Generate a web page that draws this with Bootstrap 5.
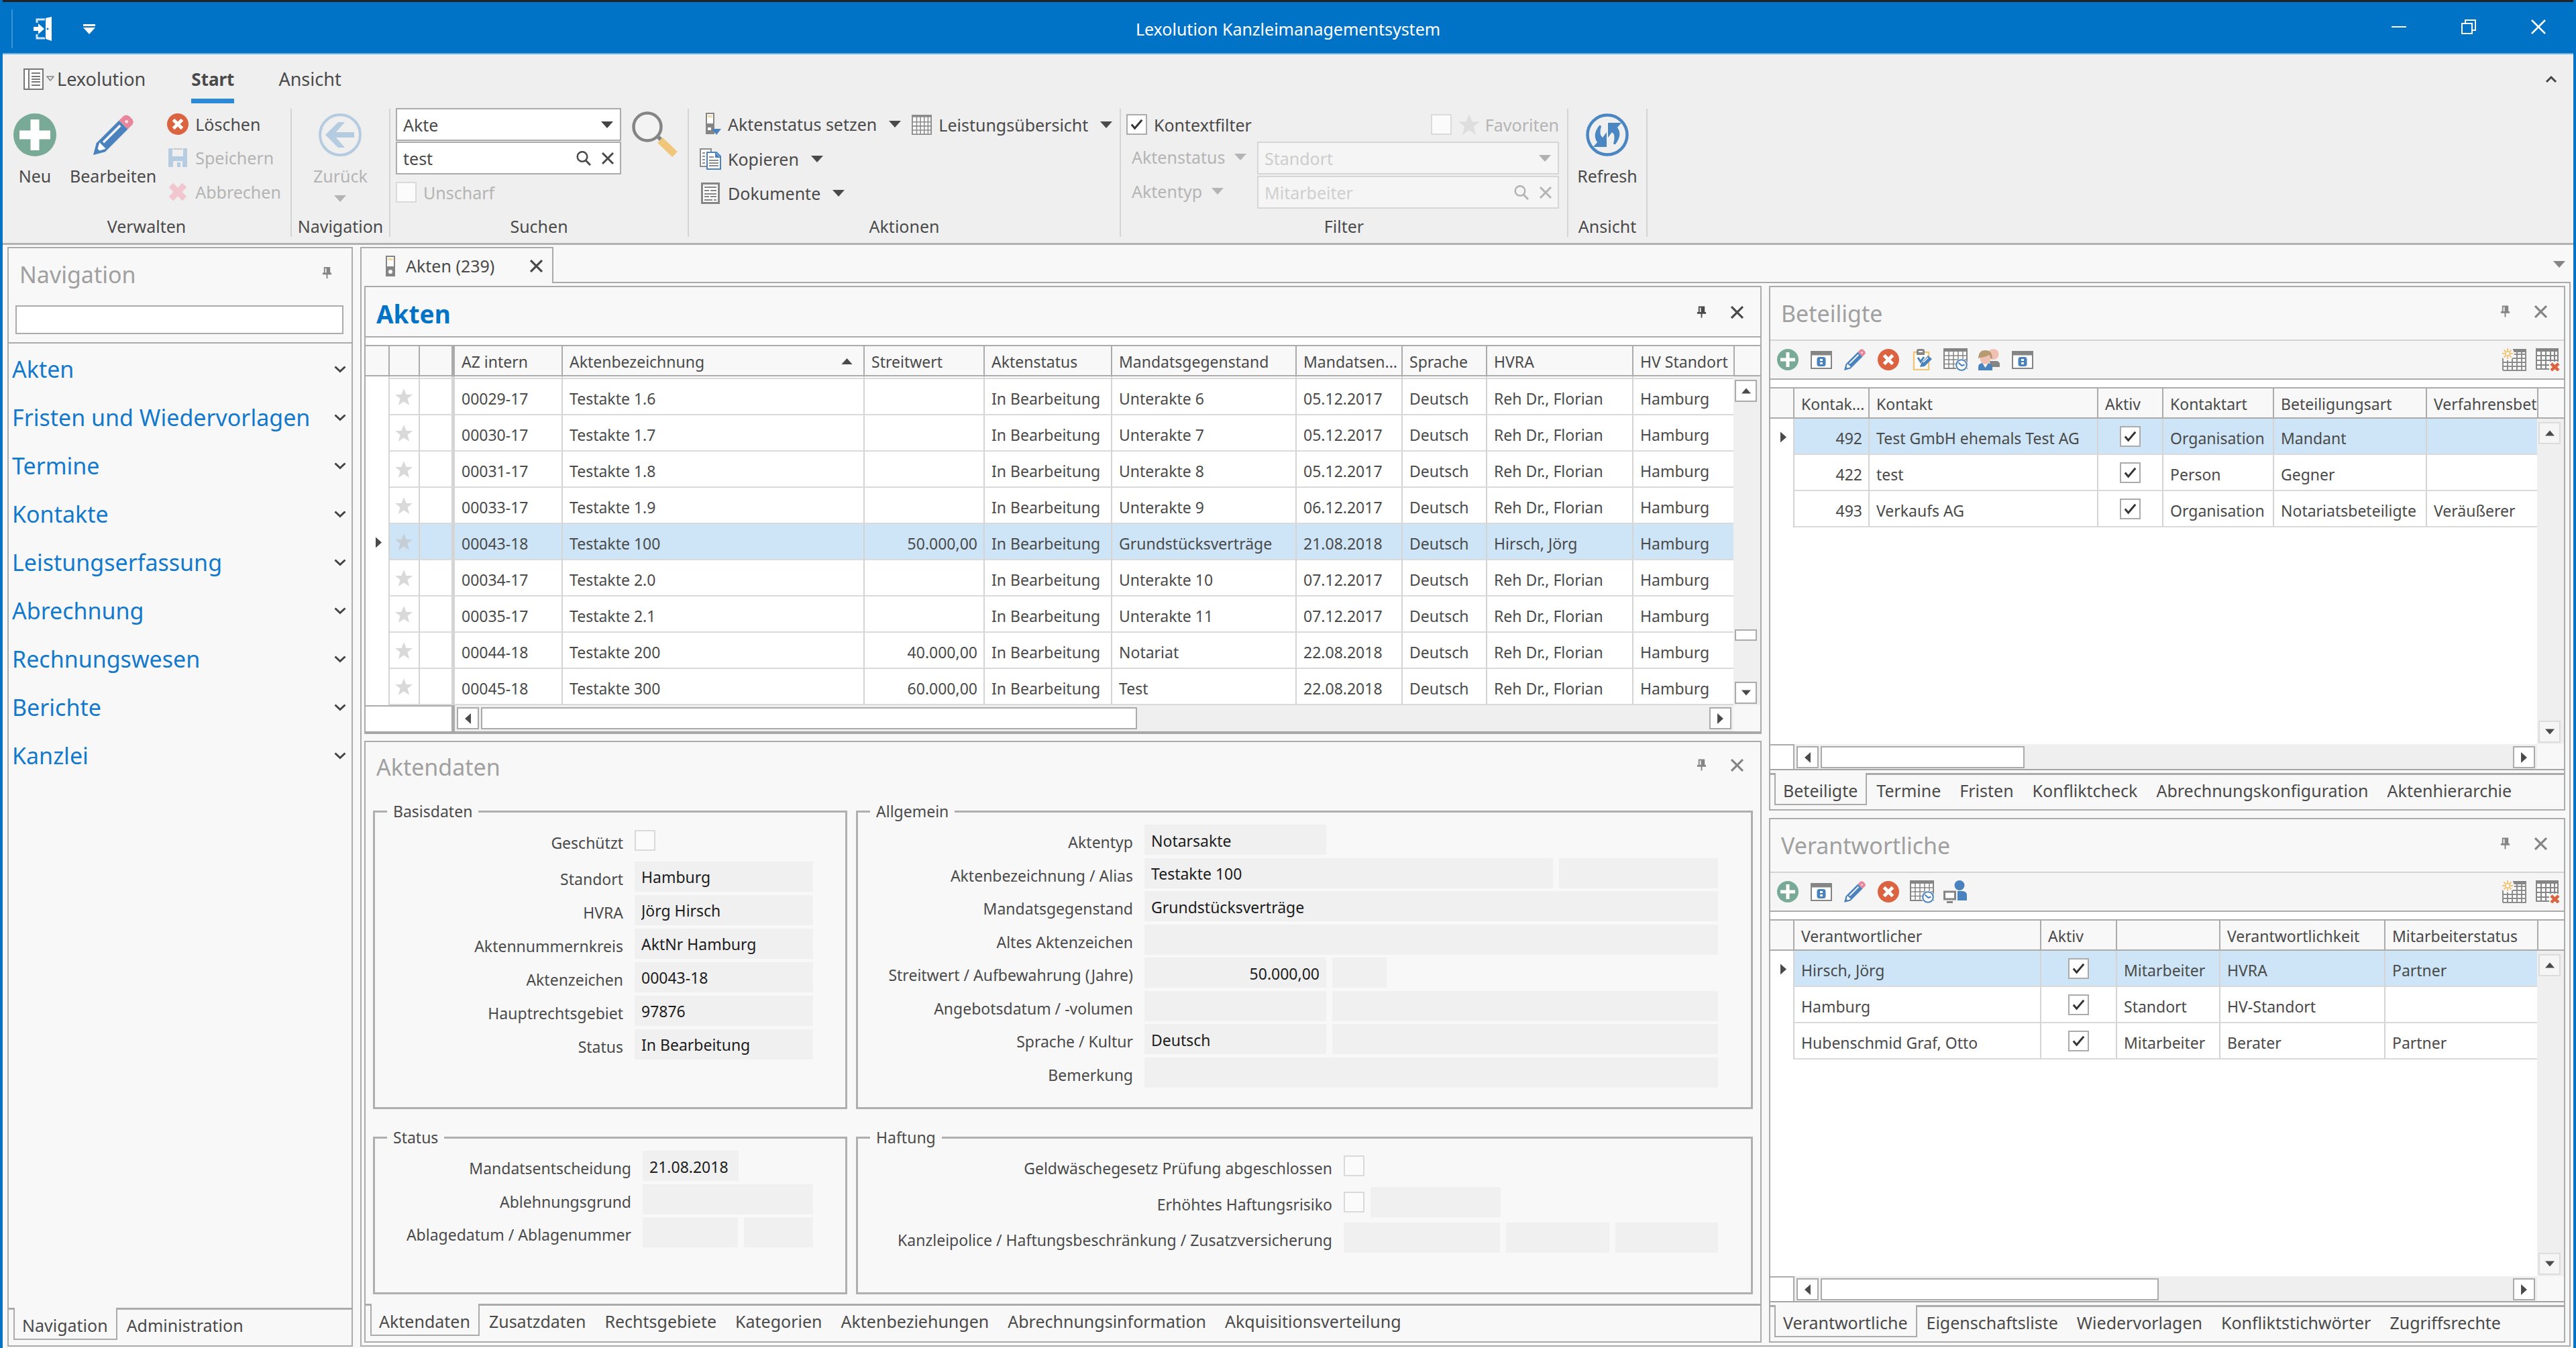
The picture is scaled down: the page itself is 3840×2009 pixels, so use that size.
<!DOCTYPE html>
<html lang="de">
<head>
<meta charset="utf-8">
<meta name="viewport" content="width=device-width, initial-scale=1">
<title>Lexolution Kanzleimanagementsystem</title>
<link href="https://cdn.jsdelivr.net/npm/bootstrap@5.3.0/dist/css/bootstrap.min.css" rel="stylesheet">
<style>
:root{--line:#ababab;--soft:#d4d4d4;--ink:#4a4a4a;--off:#b4b4b4;--blue:#0173c7;--pane:#f8f8f8;--field:#f0f0f0}
body{font-family:"Noto Sans","Open Sans",sans-serif;font-size:25px;line-height:34px;color:var(--ink);background:var(--pane)}
svg{display:block;flex:none}
button,input,select{font:inherit;color:inherit}
.plain{background:none;border:0;padding:0}
.app{min-height:100vh;border-left:4px solid var(--blue);border-right:4px solid var(--blue)}

/* title bar */
.titlebar{height:81px;background:var(--blue);color:#fff;border-top:3px solid #222;border-bottom:2px solid #6cb0e2;padding-top:4px}
.titlebar .quick{border-left:2px solid #3a93d6;height:58px;margin-left:13px;padding-left:30px;gap:45px}
.winbtn{width:104px;height:66px;display:flex;align-items:center;justify-content:center}

/* ribbon */
.ribbon{background:#efefef;border-bottom:3px solid #b2b2b2}
.ribbon-tabs{height:73px;font-size:27px;padding:0 24px 0 31px}
.ribbon-tabs a{color:var(--ink);text-decoration:none;display:flex;align-items:center;height:73px}
.ribbon-tabs .start{font-size:26px;font-weight:700;border-bottom:7px solid #2b8ad8;border-top:7px solid transparent;margin:0 66px 0 68px}
.ribbon-body{height:208px;padding-top:8px}
.grp{height:191px;border-right:2px solid var(--soft);display:flex;flex-direction:column;flex:none}
.grp-main{height:160px;display:flex}
.grp-cap{text-align:center;line-height:32px}
.g1{width:431px}.g2{width:147px}.g3{width:445px}.g4{width:644px}.g5{width:667px}.g6{width:118px}
.bigbtn{display:flex;flex-direction:column;align-items:center;padding-top:7px;gap:12px}
.rrow{height:51px;display:flex;align-items:center;gap:10px;white-space:nowrap;padding-bottom:2px}
.rrow.plain{padding-bottom:4px}
.rrow:first-child{height:49px}
.ic28{margin:0 2px}
.off{color:var(--off)}
.box{height:49px;border:2px solid var(--line);background:#fff;border-radius:0;padding:0 9px;width:100%;line-height:34px;box-shadow:none}
.box.form-select{font-size:25px;line-height:34px;color:var(--ink);padding:0 9px;background-repeat:no-repeat;background-position:right 10px center;background-size:18px 10px;background-image:url("data:image/svg+xml,%3Csvg xmlns='http://www.w3.org/2000/svg' viewBox='0 0 18 10'%3E%3Cpath d='M0 0h18l-9 10z' fill='%23444'/%3E%3C/svg%3E")}
.box.form-select:disabled{background-color:#f5f5f5;border-color:#d6d6d6;color:#cdcdcd;opacity:1;background-image:url("data:image/svg+xml,%3Csvg xmlns='http://www.w3.org/2000/svg' viewBox='0 0 18 10'%3E%3Cpath d='M0 0h18l-9 10z' fill='%23b0b0b0'/%3E%3C/svg%3E")}
.searchbox{display:flex;align-items:center;background:#fff;gap:16px;padding-right:9px}
.searchbox input{border:0;background:none;outline:0;padding:0;flex:1;min-width:0}
.searchbox.dis{background:#f5f5f5;border-color:#d6d6d6}
.searchbox.dis input::placeholder{color:#cfcfcf;opacity:1}
.tick.form-check-input{width:31px;height:31px;margin:0;border:2px solid var(--line);border-radius:0;background-color:#fff;background-size:100% 100%;flex:none;float:none;opacity:1}
.tick.form-check-input:checked{background-color:#fff;border-color:var(--line);background-image:url("data:image/svg+xml,%3Csvg xmlns='http://www.w3.org/2000/svg' viewBox='0 0 28 28'%3E%3Cpath d='M6 14l5 6L22 7' fill='none' stroke='%23333' stroke-width='3'/%3E%3C/svg%3E")}
.tick.form-check-input:disabled{border-color:#dadada;background-color:#fbfbfb;opacity:1}

/* workspace */
.work{gap:11px;padding:3px 4px 2px 7px;flex:1}
.side{width:515px;border:2px solid var(--line);display:flex;flex-direction:column;flex:none}
.side-head{height:77px;padding:0 29px 0 16px}
.pane-title{font-size:34px;line-height:46px;color:#a0a0a0;font-weight:400;margin:0}
.side-search{height:43px;border:2px solid var(--line);background:#fff;margin:8px 12px 12px 10px;border-radius:0}
.side-list{border-top:2px solid var(--line);font-size:34px;line-height:46px;padding-top:2px}
.side-list a{display:flex;justify-content:space-between;align-items:center;height:72px;padding:0 8px 0 5px;color:#1279cc;text-decoration:none}
.doc{flex:1;min-width:0;display:flex;flex-direction:column}
.doc-tabs{height:54px;display:flex;border-bottom:2px solid var(--line);justify-content:space-between;align-items:center}
.doc-tab{width:288px;height:54px;border:2px solid var(--line);border-bottom:0;background:var(--pane);display:flex;align-items:center;padding:0 14px 0 36px;margin-bottom:-2px}
.doc-body{flex:1;display:flex;gap:11px;padding:4px 6px 4px 4px;border:2px solid var(--line);border-top:0}
.col-mid{flex:1;min-width:0;display:flex;flex-direction:column;gap:10px}
.col-side{width:1187px;flex:none;display:flex;flex-direction:column;gap:11px}
.pane{border:2px solid var(--line);display:flex;flex-direction:column}
.grow{flex:1 1 0}
.pane-head{height:78px;padding:0 25px 0 16px;display:flex;align-items:center;justify-content:space-between}
.pane-head.low{height:73px;padding-top:7px}
.pane-head.low .pane-title{color:var(--blue);font-weight:700;font-size:37px}
.pane-head .acts{gap:36px;margin-top:-6px}
.toolbar{height:58px;background:#f5f5f5;border-top:2px solid var(--soft);display:flex;align-items:center;padding:0 8px 0 10px;gap:18px}
.toolbar svg[width="36"]{margin:0 -2px}
.band{height:15px;background:#fff;border-top:2px solid var(--line);border-bottom:2px solid var(--line)}

/* data grids */
.grid-wrap{display:flex;background:#fff;font-size:23px;line-height:32px}
.grid-table{table-layout:fixed;border-collapse:separate;border-spacing:0;margin:0;color:var(--ink);width:100%}
.grid-hold{flex:1;min-width:0;overflow:hidden}
.grid-table th{height:45px;padding:2px 0 0 10px;font-weight:400;background:var(--pane);border:0;border-right:2px solid var(--line);border-bottom:2px solid var(--line);white-space:nowrap;overflow:hidden;vertical-align:middle}
.grid-table td{height:54px;padding:5px 9px 0 10px;background:#fff;border:0;border-right:2px solid var(--soft);border-bottom:2px solid #dadada;white-space:nowrap;overflow:hidden;vertical-align:middle}
.grid-table td:first-child{border-bottom:0;padding:0 0 0 15px}
.grid-table tr>:last-child{border-right:0;padding-right:0}
.grid-table .pic{padding:0 0 0 8px}
.grid-table .midc{padding:0;text-align:center}
.grid-table .midc input{display:block;margin:0 auto}
.grid-table .picked td:not(:first-child){background:#cde5f7}
.grid-table .thin td{height:4px;padding:0}
.grid-table .thick{border-right-width:5px}
.num{text-align:right}
.vs{width:40px;flex:none;display:flex;flex-direction:column}
.vs-head{height:45px;background:var(--pane);border-left:2px solid var(--line);border-bottom:2px solid var(--line);flex:none}
.vs-track{flex:1;background:#efefef;display:flex;flex-direction:column;padding:5px 2px 2px}
.sb{width:33px;height:33px;border:2px solid var(--line);background:#fff;padding:0;display:flex;align-items:center;justify-content:center;flex:none}
.soft .vs-track .sb{border-color:#dcdcdc;background:#f5f5f5}
.hs{height:41px;display:flex;background:#efefef;border-bottom:2px solid #a4a4a4}
.soft .hs{height:39px}
.hs .sb{margin:3px 3px 0}
.hs-corner{width:36px;background:#fff;border-top:2px solid var(--line);border-right:2px solid var(--line);flex:none}
.hs-corner.wide{width:133px;border-right-width:5px}
.hs-end{width:40px;background:var(--pane);flex:none}
.thumb{border:2px solid var(--line);background:#fff;width:33px;height:17px}
.hs .thumb{height:33px;margin-top:3px}

/* tab rows under a pane */
.tabs{display:flex;height:56px;border-top:3px solid var(--line);padding-left:7px;margin:0;list-style:none}
.soft .tabs{height:54px;padding-left:6px}
.tabs a{display:block;height:48px;margin-top:-3px;border:2px solid transparent;border-top:0;padding:9px 12px 0 11px;color:var(--ink);text-decoration:none;white-space:nowrap}
.tabs li+li a{padding-left:12px}
.tabs .on{background:var(--pane);border-color:var(--line)}

/* record form */
.form-area{font-size:23px;line-height:32px;display:grid;grid-template-columns:707px 1fr;grid-template-rows:auto 1fr;gap:26px 13px;padding:13px 11px 14px;flex:1}
fieldset.fs{border:3px solid #afafaf;min-width:0;padding:4px 0 25px}
.fs legend{float:none;width:auto;font-size:23px;line-height:32px;margin:0 0 0 18px;padding:0 9px}
.frow{display:flex;gap:9px;height:45px;margin-bottom:4px;align-items:center}
.frow:nth-of-type(even){height:46px}
.frow label{text-align:right;padding-top:7px;margin-right:8px;white-space:nowrap;flex:none}
.frow input.val{height:45px;border:0;border-radius:0;background:var(--field);padding:2px 10px 0;min-width:0;color:#1c1c1c}
.fs-a label{width:370px}.fs-b label{width:410px}.fs-c label{width:382px}.fs-d label{width:707px}
.fs-a .frow,.fs-c .frow{margin-right:48px}
.fs-b .frow,.fs-d .frow{margin-right:49px}
.fs-a .frow{height:46px}
.fs-a .frow:nth-of-type(1){margin-bottom:8px}
.w80{width:81px}.w100{width:103px}.w140{width:143px}.w200{width:194px}.w230{width:233px}.w270{width:271px}
</style>
</head>
<body>
<svg width="0" height="0" class="position-absolute" aria-hidden="true">
<defs>
<symbol id="i-plus" viewBox="0 0 32 32"><circle cx="16" cy="16" r="16" fill="#79aa98"/><path d="M16 5v22M5 16h22" stroke="#fff" stroke-width="5"/></symbol>
<symbol id="i-plus-big" viewBox="0 0 32 32"><circle cx="16" cy="16" r="16" fill="#79aa98"/><path d="M16 4.5v23M4.500 16h23" stroke="#fff" stroke-width="6.500"/></symbol>
<symbol id="i-del" viewBox="0 0 32 32"><circle cx="16" cy="16" r="16" fill="#dc6340"/><path d="M9.500 9.500l13 13M22.500 9.500l-13 13" stroke="#fff" stroke-width="5"/></symbol>
<symbol id="i-pen" viewBox="0 0 32 32"><path d="M0 32l2.500-9.500L20.500 4.500l7 7L9.500 29.500z" fill="#4a82bd"/><path d="M20.500 4.500l3.500-3.500q2-1.600 4.500 0l2.500 2.500q1.600 2.500 0 4.500l-3.500 3.500z" fill="#e8869c"/><path d="M3.500 27l1.500-5 5 5-5 1.500z" fill="#fff"/><path d="M8 22L21.500 8.500" stroke="#f3f5f8" stroke-width="1.800"/><circle cx="26.500" cy="5.500" r="1.300" fill="#fbe3e8"/></symbol>
<symbol id="i-win" viewBox="0 0 32 32"><path d="M1 4h30v25H1z" fill="#fff" stroke="#858585" stroke-width="2"/><path d="M0 3h32v6.500H0z" fill="#858585"/><rect x="9.500" y="12" width="13" height="14" rx="3.500" fill="#4a82bd"/><path d="M14 15h4v3h-4zM14 20h4v3h-4z" fill="#fff"/></symbol>
<symbol id="i-clip" viewBox="0 0 32 32"><path d="M4 5h22v26H4z" fill="#fff" stroke="#efc67a" stroke-width="2.500"/><path d="M8 3q0-3 3-3h6q3 0 3 3v6H8z" fill="#858585"/><path d="M11 3h6v2h-6z" fill="#fff"/><path d="M10 13l4 6 5-7" fill="none" stroke="#4a82bd" stroke-width="3"/><path d="M13 27l2-6 10-11 6 5-11 11z" fill="#4a82bd"/><path d="M18 20l7-7" stroke="#fff" stroke-width="1.500"/></symbol>
<symbol id="i-cal" viewBox="0 0 32 32"><path d="M1 1h30v30H1z" fill="#fff" stroke="#8c8c8c" stroke-width="2"/><path d="M0 0h32v4H0z" fill="#8c8c8c"/><path d="M1 11.500h30M1 18h30M1 24.500h30M8 1v30M14 1v30M20 1v30M26 1v30" stroke="#8c8c8c" stroke-width="1.700"/></symbol>
<symbol id="i-calclock" viewBox="0 0 36 34"><path d="M1 1h34v29H1z" fill="#fff" stroke="#858585" stroke-width="2"/><path d="M0 0h36v5H0z" fill="#858585"/><path d="M1 11h34M1 17h34M1 23.500h34M8 4v26M15 4v26M22 4v26M29 4v26" stroke="#858585" stroke-width="1.500"/><circle cx="27" cy="25" r="9.500" fill="#f5f5f5"/><circle cx="27" cy="25" r="7.800" fill="#fff" stroke="#4a82bd" stroke-width="2"/><path d="M22.500 21.500l5 4.500 4-1.500" fill="none" stroke="#4a82bd" stroke-width="2"/></symbol>
<symbol id="i-people" viewBox="0 0 32 32"><path d="M17 18h11q4 1 4 5v4H18z" fill="#858585"/><circle cx="22.500" cy="8" r="8" fill="#f0c0b3"/><path d="M0 32v-5q0-5 6-6h8q7 1 7 6v5z" fill="#4a82bd"/><path d="M6 21l4.500 7 4.500-7z" fill="#fff"/><ellipse cx="10.500" cy="14" rx="8" ry="9" fill="#f0c0b3"/><path d="M0 15Q0 2 10.500 2T21 15l-3-1q0-4-2-5-7 4-14 4z" fill="#b59a74"/></symbol>
<symbol id="i-calnew" viewBox="0 0 36 34"><path d="M2 5h33v28H2z" fill="#fff"/><path d="M16 1h20v5H16z" fill="#858585"/><path d="M1 33h35M1 12v21M35 3v30M1 15h34M1 21h34M1 27h34M8 14v19M15 14v19M22 4v29M29 4v29M15 9h20" stroke="#8c8c8c" stroke-width="2"/><circle cx="8" cy="8" r="10" fill="#f5f5f5"/><path d="M8 0v16M0 8h16M2.500 2.500l11 11M13.500 2.500l-11 11" stroke="#efc67a" stroke-width="2"/><circle cx="8" cy="8" r="3" fill="#fff" stroke="#efc67a" stroke-width="1.500"/></symbol>
<symbol id="i-caldel" viewBox="0 0 36 34"><path d="M1 1h32v30H1z" fill="#fff" stroke="#858585" stroke-width="2"/><path d="M0 0h34v5H0z" fill="#858585"/><path d="M1 11h33M1 18h33M1 25h33M8 4v27M15 4v27M22 4v27M28 4v27" stroke="#858585" stroke-width="2"/><path d="M20 20h16v14H20z" fill="#f5f5f5"/><path d="M23 23l11 10M34 23L23 33" stroke="#dc6340" stroke-width="4.500"/></symbol>
<symbol id="i-pcuser" viewBox="0 0 36 34"><ellipse cx="24" cy="7.500" rx="7.500" ry="7.500" fill="#4a82bd"/><path d="M18 16h11q6 1 6 6v8H21v-14z" fill="#4a82bd"/><path d="M1.500 17h16v11h-16z" fill="#fff" stroke="#858585" stroke-width="3"/><path d="M5 31h9v3H5z" fill="#858585"/></symbol>
<symbol id="i-save" viewBox="0 0 28 28"><path d="M0 0h6v12h16V0h6v28H0z" fill="#b5cce1"/><path d="M7 1h14" stroke="#c9c9c9" stroke-width="2"/><path d="M7 17h14v11h-3v-7h-5v7H7z" fill="#efefef"/><path d="M7 17h14v2H7z" fill="#b5cce1"/></symbol>
<symbol id="i-cancel" viewBox="0 0 28 28"><path d="M4 4l20 20M24 4L4 24" stroke="#f1c6cf" stroke-width="9"/></symbol>
<symbol id="i-back" viewBox="0 0 64 64"><circle cx="32" cy="32" r="30" fill="none" stroke="#b5cbe0" stroke-width="4"/><path d="M10 32l19-19h10L26 28h27v8H26l13 15H29z" fill="#b5cbe0"/></symbol>
<symbol id="i-refresh" viewBox="0 0 64 64"><circle cx="32" cy="32" r="29.500" fill="none" stroke="#4a87c2" stroke-width="4.500"/><path d="M33 14h20l-6 7q8 11-3 25-1 1-3-1 4-13-2-17l-6 8z" fill="#4a87c2"/><path d="M31 50H11l6-7q-8-11 3-25 1-1 3 1-4 13 2 17l6-8z" fill="#4a87c2"/></symbol>
<symbol id="i-bigmag" viewBox="0 0 68 68"><circle cx="23" cy="23" r="20.500" fill="#f3f3f3" stroke="#858585" stroke-width="4.500"/><path d="M37 36l6 6" stroke="#858585" stroke-width="6"/><path d="M42 43L64 64" stroke="#efc67a" stroke-width="11"/></symbol>
<symbol id="i-mag" viewBox="0 0 23 22"><circle cx="10" cy="8.500" r="7.300" fill="none" stroke="currentColor" stroke-width="2.500"/><path d="M15 14l7 7" stroke="currentColor" stroke-width="3"/></symbol>
<symbol id="i-x" viewBox="0 0 18 18"><path d="M1 1l16 16M17 1L1 17" stroke="currentColor" stroke-width="3"/></symbol>
<symbol id="i-down" viewBox="0 0 18 10"><path d="M0 0h18l-9 10z" fill="currentColor"/></symbol>
<symbol id="i-up" viewBox="0 0 18 10"><path d="M0 10h18L9 0z" fill="currentColor"/></symbol>
<symbol id="i-right" viewBox="0 0 10 18"><path d="M0 0v18l10-9z" fill="currentColor"/></symbol>
<symbol id="i-left" viewBox="0 0 10 18"><path d="M10 0v18L0 9z" fill="currentColor"/></symbol>
<symbol id="i-pin" viewBox="0 0 16 20"><path d="M3 1h10v9h2v3H9v6H7v-6H1v-3h2z" fill="currentColor"/><path d="M5 3h2v7H5z" fill="#f8f8f8"/></symbol>
<symbol id="i-chev" viewBox="0 0 18 12"><path d="M1.500 2.500L9 9.500l7.500-7" fill="none" stroke="#444" stroke-width="3"/></symbol>
<symbol id="i-star" viewBox="0 0 26 25"><path d="M13 0l3.600 9H26l-7.500 6 2.700 10L13 19.500 4.800 25l2.700-10L0 9h9.400z" fill="currentColor"/></symbol>
<symbol id="i-file" viewBox="0 0 14 31"><path d="M1 1h12v29H1z" fill="#fff" stroke="#858585" stroke-width="2"/><path d="M3 4h8v3H3z" fill="#f6d9a3"/><path d="M0 16h14v15H0z" fill="#858585"/><circle cx="7" cy="24" r="3" fill="#fff"/></symbol>
<symbol id="i-copy" viewBox="0 0 32 32"><path d="M1 1h16v26H1z" fill="#fff" stroke="#8c8c8c" stroke-width="2"/><path d="M4 7h4M4 12h4M4 17h4M4 22h4" stroke="#8c8c8c" stroke-width="2"/><path d="M11 6h14l6 6v19H11z" fill="#fff" stroke="#4a82bd" stroke-width="2"/><path d="M23 6v8h8z" fill="#4a82bd"/><path d="M14 13h7M14 18h14M14 22h14M14 26h14" stroke="#8c8c8c" stroke-width="2"/></symbol>
<symbol id="i-docu" viewBox="0 0 28 32"><path d="M1.500 1.500h25v29h-25z" fill="#fff" stroke="#858585" stroke-width="3"/><path d="M5 7h18M5 12h7M14 12h9M5 17h18M5 21h7M14 21h9M5 26h12M19 26h4" stroke="#858585" stroke-width="2"/></symbol>
</defs>
</svg>

<div class="app d-flex flex-column">
<header class="titlebar d-flex align-items-center">
  <div class="flex-fill w-25 d-flex">
    <div class="quick d-flex align-items-center">
      <button class="plain" aria-label="Beenden"><svg width="30" height="36" viewBox="0 0 30 36"><path d="M6 9V4h12M6 26v6h12" fill="none" stroke="#cfe4f5" stroke-width="3"/><path d="M19 2l9-2v36l-9-3z" fill="#fff"/><path d="M1 15h7v-5l9 8-9 8v-5H1z" fill="#fff"/><circle cx="22" cy="18" r="1.500" fill="#0173c7"/></svg></button>
      <button class="plain" aria-label="Schnellzugriff anpassen"><svg width="18" height="15" viewBox="0 0 18 15"><path d="M0 0h18v3H0zM0 5h18l-9 10z" fill="#fff"/></svg></button>
    </div>
  </div>
  <div>Lexolution Kanzleimanagementsystem</div>
  <div class="flex-fill w-25 d-flex justify-content-end align-self-start">
    <button class="plain winbtn" aria-label="Minimieren"><svg width="22" height="22" viewBox="0 0 22 22"><path d="M0 11h22" stroke="#fff" stroke-width="2"/></svg></button>
    <button class="plain winbtn" aria-label="Wiederherstellen"><svg width="22" height="22" viewBox="0 0 22 22"><path d="M1 6h15v15H1zM6 6V1h15v15h-5" fill="none" stroke="#fff" stroke-width="2"/></svg></button>
    <button class="plain winbtn" aria-label="Schließen"><svg width="22" height="22" viewBox="0 0 22 22"><path d="M1 1l20 20M21 1L1 21" stroke="#fff" stroke-width="2.500"/></svg></button>
  </div>
</header>

<section class="ribbon">
  <nav class="ribbon-tabs d-flex align-items-center">
    <a href="#"><svg class="me-1" width="30" height="32" viewBox="0 0 30 32"><path d="M1 1h28v30H1z" fill="#fff" stroke="#777" stroke-width="2"/><path d="M8 1v30M12 7h13M12 12h13M12 16h13M12 20h13M12 25h13" stroke="#777" stroke-width="2"/></svg><svg class="me-1" width="12" height="9" viewBox="0 0 12 9"><path d="M1 1h10L6 7z" fill="none" stroke="#888" stroke-width="1.500"/></svg>Lexolution</a>
    <a href="#" class="start">Start</a>
    <a href="#">Ansicht</a>
    <button class="plain ms-auto" aria-label="Menüband reduzieren"><svg width="18" height="12" viewBox="0 0 18 12"><path d="M2 10l7-7 7 7" fill="none" stroke="#444" stroke-width="3"/></svg></button>
  </nav>
  <div class="ribbon-body d-flex">
    <div class="grp g1">
      <div class="grp-main">
        <button class="plain bigbtn px-3"><svg width="64" height="64"><use href="#i-plus-big"/></svg>Neu</button>
        <button class="plain bigbtn me-3 ps-1"><svg width="60" height="64"><use href="#i-pen"/></svg>Bearbeiten</button>
        <div>
          <button class="plain rrow"><svg width="32" height="32"><use href="#i-del"/></svg>Löschen</button>
          <button class="plain rrow off" disabled><svg class="ic28" width="28" height="28"><use href="#i-save"/></svg>Speichern</button>
          <button class="plain rrow off" disabled><svg class="ic28" width="28" height="28"><use href="#i-cancel"/></svg>Abbrechen</button>
        </div>
      </div>
      <div class="grp-cap">Verwalten</div>
    </div>
    <div class="grp g2">
      <div class="grp-main justify-content-center">
        <button class="plain bigbtn off" disabled><svg width="64" height="64"><use href="#i-back"/></svg>Zurück<svg width="18" height="10"><use href="#i-down"/></svg></button>
      </div>
      <div class="grp-cap">Navigation</div>
    </div>
    <div class="grp g3">
      <div class="grp-main ps-2 gap-3">
        <div style="width:336px">
          <div class="rrow"><select class="form-select box" aria-label="Suchbereich"><option>Akte</option></select></div>
          <div class="rrow"><div class="box searchbox"><input type="text" value="test" aria-label="Suchbegriff"><button class="plain" aria-label="Suchen"><svg width="23" height="22"><use href="#i-mag"/></svg></button><button class="plain" aria-label="Löschen"><svg width="18" height="18"><use href="#i-x"/></svg></button></div></div>
          <div class="rrow off"><input class="form-check-input tick" type="checkbox" id="unscharf" disabled><label for="unscharf">Unscharf</label></div>
        </div>
        <button class="plain align-self-start pt-1" aria-label="Suche starten"><svg width="68" height="68"><use href="#i-bigmag"/></svg></button>
      </div>
      <div class="grp-cap">Suchen</div>
    </div>
    <div class="grp g4">
      <div class="grp-main ps-3">
        <div>
          <div class="d-flex gap-2">
            <button class="plain rrow"><svg width="32" height="34" viewBox="0 0 32 34"><path d="M10 1h11v30H10z" fill="#fff" stroke="#858585" stroke-width="2"/><path d="M12 4h7v3h-7z" fill="#f6d9a3"/><path d="M9 16h13v16H9z" fill="#858585"/><path d="M12 22h5v4h-5z" fill="#fff"/><path d="M18 24h14l-7 9z" fill="#4a82bd"/></svg>Aktenstatus setzen<svg class="ms-2" width="18" height="10"><use href="#i-down"/></svg></button>
            <button class="plain rrow ps-2"><svg width="30" height="30"><use href="#i-cal"/></svg>Leistungsübersicht<svg class="ms-2" width="18" height="10"><use href="#i-down"/></svg></button>
          </div>
          <button class="plain rrow"><svg width="32" height="32"><use href="#i-copy"/></svg>Kopieren<svg class="ms-2" width="18" height="10"><use href="#i-down"/></svg></button>
          <button class="plain rrow"><svg class="ic28" width="28" height="32"><use href="#i-docu"/></svg>Dokumente<svg class="ms-2" width="18" height="10"><use href="#i-down"/></svg></button>
        </div>
      </div>
      <div class="grp-cap">Aktionen</div>
    </div>
    <div class="grp g5">
      <div class="grp-main flex-column ps-2 pe-2">
        <div class="rrow me-1"><input class="form-check-input tick" type="checkbox" id="kontext" checked><label for="kontext">Kontextfilter</label>
          <input class="form-check-input tick ms-auto" type="checkbox" id="fav" disabled><label class="off d-flex align-items-center gap-2" for="fav"><svg width="32" height="31" color="#dedede"><use href="#i-star"/></svg>Favoriten</label></div>
        <div class="rrow ps-2 me-1"><button class="plain rrow off flex-fill" disabled>Aktenstatus<svg class="ms-1" width="18" height="10"><use href="#i-down"/></svg></button><div style="width:450px"><select class="form-select box" disabled aria-label="Standort"><option>Standort</option></select></div></div>
        <div class="rrow ps-2 me-1"><button class="plain rrow off flex-fill" disabled>Aktentyp<svg class="ms-1" width="18" height="10"><use href="#i-down"/></svg></button><div style="width:450px"><div class="box searchbox dis off"><input type="text" placeholder="Mitarbeiter" disabled aria-label="Mitarbeiter"><svg width="23" height="22"><use href="#i-mag"/></svg><svg width="18" height="18"><use href="#i-x"/></svg></div></div></div>
      </div>
      <div class="grp-cap">Filter</div>
    </div>
    <div class="grp g6">
      <div class="grp-main justify-content-center">
        <button class="plain bigbtn"><svg width="64" height="64"><use href="#i-refresh"/></svg>Refresh</button>
      </div>
      <div class="grp-cap">Ansicht</div>
    </div>
  </div>
</section>

<main class="work d-flex">
  <aside class="side">
    <div class="side-head d-flex align-items-center justify-content-between"><h2 class="pane-title">Navigation</h2><button class="plain mb-1" aria-label="Anheften"><svg width="15" height="19" color="#858585"><use href="#i-pin"/></svg></button></div>
    <input type="search" class="side-search" aria-label="Navigation durchsuchen">
    <nav class="side-list flex-fill">
      <a href="#">Akten<svg width="18" height="12"><use href="#i-chev"/></svg></a>
      <a href="#">Fristen und Wiedervorlagen<svg width="18" height="12"><use href="#i-chev"/></svg></a>
      <a href="#">Termine<svg width="18" height="12"><use href="#i-chev"/></svg></a>
      <a href="#">Kontakte<svg width="18" height="12"><use href="#i-chev"/></svg></a>
      <a href="#">Leistungserfassung<svg width="18" height="12"><use href="#i-chev"/></svg></a>
      <a href="#">Abrechnung<svg width="18" height="12"><use href="#i-chev"/></svg></a>
      <a href="#">Rechnungswesen<svg width="18" height="12"><use href="#i-chev"/></svg></a>
      <a href="#">Berichte<svg width="18" height="12"><use href="#i-chev"/></svg></a>
      <a href="#">Kanzlei<svg width="18" height="12"><use href="#i-chev"/></svg></a>
    </nav>
    <ul class="tabs"><li><a class="on" href="#">Navigation</a></li><li><a href="#">Administration</a></li></ul>
  </aside>

  <div class="doc">
    <div class="doc-tabs">
      <div class="doc-tab"><svg width="14" height="31"><use href="#i-file"/></svg><span class="ms-3">Akten (239)</span><button class="plain ms-auto" aria-label="Schließen"><svg width="19" height="19"><use href="#i-x"/></svg></button></div>
      <button class="plain me-2" aria-label="Weitere Registerkarten"><svg width="18" height="10" color="#858585"><use href="#i-down"/></svg></button>
    </div>
    <div class="doc-body">
      <div class="col-mid">
        <section class="pane">
          <div class="pane-head low"><h2 class="pane-title">Akten</h2><div class="acts d-flex align-items-center"><button class="plain" aria-label="Anheften"><svg width="15" height="20"><use href="#i-pin"/></svg></button><button class="plain" aria-label="Schließen"><svg width="19" height="19"><use href="#i-x"/></svg></button></div></div>
          <div class="band"></div>
          <div class="grid-wrap">
            <div class="grid-hold">
            <table class="table grid-table">
              <colgroup><col style="width:36px"><col style="width:45px"><col style="width:52px"><col style="width:161px"><col style="width:450px"><col style="width:179px"><col style="width:190px"><col style="width:275px"><col style="width:158px"><col style="width:126px"><col style="width:218px"><col></colgroup>
              <thead><tr><th></th><th></th><th class="thick"></th><th>AZ intern</th><th><div class="d-flex justify-content-between align-items-center pe-3">Aktenbezeichnung<svg width="17" height="9"><use href="#i-up"/></svg></div></th><th>Streitwert</th><th>Aktenstatus</th><th>Mandatsgegenstand</th><th>Mandatsen...</th><th>Sprache</th><th>HVRA</th><th>HV Standort</th></tr></thead>
              <tbody>
                <tr class="thin" aria-hidden="true"><td></td><td></td><td class="thick"></td><td></td><td></td><td></td><td></td><td></td><td></td><td></td><td></td><td></td></tr>
                <tr><td></td><td class="pic"><svg width="26" height="25" color="#d9d9d9"><use href="#i-star"/></svg></td><td class="thick"></td><td>00029-17</td><td>Testakte 1.6</td><td class="num"></td><td>In Bearbeitung</td><td>Unterakte 6</td><td>05.12.2017</td><td>Deutsch</td><td>Reh Dr., Florian</td><td>Hamburg</td></tr>
                <tr><td></td><td class="pic"><svg width="26" height="25" color="#d9d9d9"><use href="#i-star"/></svg></td><td class="thick"></td><td>00030-17</td><td>Testakte 1.7</td><td class="num"></td><td>In Bearbeitung</td><td>Unterakte 7</td><td>05.12.2017</td><td>Deutsch</td><td>Reh Dr., Florian</td><td>Hamburg</td></tr>
                <tr><td></td><td class="pic"><svg width="26" height="25" color="#d9d9d9"><use href="#i-star"/></svg></td><td class="thick"></td><td>00031-17</td><td>Testakte 1.8</td><td class="num"></td><td>In Bearbeitung</td><td>Unterakte 8</td><td>05.12.2017</td><td>Deutsch</td><td>Reh Dr., Florian</td><td>Hamburg</td></tr>
                <tr><td></td><td class="pic"><svg width="26" height="25" color="#d9d9d9"><use href="#i-star"/></svg></td><td class="thick"></td><td>00033-17</td><td>Testakte 1.9</td><td class="num"></td><td>In Bearbeitung</td><td>Unterakte 9</td><td>06.12.2017</td><td>Deutsch</td><td>Reh Dr., Florian</td><td>Hamburg</td></tr>
                <tr class="picked"><td><svg width="9" height="17"><use href="#i-right"/></svg></td><td class="pic"><svg width="26" height="25" color="#c6ced5"><use href="#i-star"/></svg></td><td class="thick"></td><td>00043-18</td><td>Testakte 100</td><td class="num">50.000,00</td><td>In Bearbeitung</td><td>Grundstücksverträge</td><td>21.08.2018</td><td>Deutsch</td><td>Hirsch, Jörg</td><td>Hamburg</td></tr>
                <tr><td></td><td class="pic"><svg width="26" height="25" color="#d9d9d9"><use href="#i-star"/></svg></td><td class="thick"></td><td>00034-17</td><td>Testakte 2.0</td><td class="num"></td><td>In Bearbeitung</td><td>Unterakte 10</td><td>07.12.2017</td><td>Deutsch</td><td>Reh Dr., Florian</td><td>Hamburg</td></tr>
                <tr><td></td><td class="pic"><svg width="26" height="25" color="#d9d9d9"><use href="#i-star"/></svg></td><td class="thick"></td><td>00035-17</td><td>Testakte 2.1</td><td class="num"></td><td>In Bearbeitung</td><td>Unterakte 11</td><td>07.12.2017</td><td>Deutsch</td><td>Reh Dr., Florian</td><td>Hamburg</td></tr>
                <tr><td></td><td class="pic"><svg width="26" height="25" color="#d9d9d9"><use href="#i-star"/></svg></td><td class="thick"></td><td>00044-18</td><td>Testakte 200</td><td class="num">40.000,00</td><td>In Bearbeitung</td><td>Notariat</td><td>22.08.2018</td><td>Deutsch</td><td>Reh Dr., Florian</td><td>Hamburg</td></tr>
                <tr><td></td><td class="pic"><svg width="26" height="25" color="#d9d9d9"><use href="#i-star"/></svg></td><td class="thick"></td><td>00045-18</td><td>Testakte 300</td><td class="num">60.000,00</td><td>In Bearbeitung</td><td>Test</td><td>22.08.2018</td><td>Deutsch</td><td>Reh Dr., Florian</td><td>Hamburg</td></tr>
              </tbody>
            </table>
            </div>
            <div class="vs"><div class="vs-head"></div><div class="vs-track"><button class="sb" aria-label="Nach oben"><svg width="14" height="9"><use href="#i-up"/></svg></button><div style="flex:339"></div><div class="thumb"></div><div style="flex:61"></div><button class="sb" aria-label="Nach unten"><svg width="14" height="9"><use href="#i-down"/></svg></button></div></div>
          </div>
          <div class="hs"><div class="hs-corner wide"></div><button class="sb" aria-label="Nach links"><svg width="9" height="16"><use href="#i-left"/></svg></button><div class="flex-fill"><div class="thumb" style="width:53.500%"></div></div><button class="sb" aria-label="Nach rechts"><svg width="9" height="16"><use href="#i-right"/></svg></button><div class="hs-end"></div></div>
        </section>

        <section class="pane flex-fill">
          <div class="pane-head" style="height:74px"><h2 class="pane-title">Aktendaten</h2><div class="acts d-flex align-items-center" style="color:#858585"><button class="plain" aria-label="Anheften"><svg width="15" height="20"><use href="#i-pin"/></svg></button><button class="plain" aria-label="Schließen"><svg width="19" height="19"><use href="#i-x"/></svg></button></div></div>
          <form class="form-area">
            <fieldset class="fs fs-a"><legend>Basisdaten</legend>
              <div class="frow"><label for="a0">Geschützt</label><input class="form-check-input tick" type="checkbox" id="a0" disabled></div>
              <div class="frow"><label for="a1">Standort</label><input class="val flex-fill" id="a1" value="Hamburg" readonly></div>
              <div class="frow"><label for="a2">HVRA</label><input class="val flex-fill" id="a2" value="Jörg Hirsch" readonly></div>
              <div class="frow"><label for="a3">Aktennummernkreis</label><input class="val flex-fill" id="a3" value="AktNr Hamburg" readonly></div>
              <div class="frow"><label for="a4">Aktenzeichen</label><input class="val flex-fill" id="a4" value="00043-18" readonly></div>
              <div class="frow"><label for="a5">Hauptrechtsgebiet</label><input class="val flex-fill" id="a5" value="97876" readonly></div>
              <div class="frow"><label for="a6">Status</label><input class="val flex-fill" id="a6" value="In Bearbeitung" readonly></div>
            </fieldset>
            <fieldset class="fs fs-b"><legend>Allgemein</legend>
              <div class="frow"><label for="b0">Aktentyp</label><input class="val w270" id="b0" value="Notarsakte" readonly></div>
              <div class="frow"><label for="b1">Aktenbezeichnung / Alias</label><input class="val flex-fill" id="b1" value="Testakte 100" readonly><input class="val" style="width:237px" aria-label="Alias" readonly></div>
              <div class="frow"><label for="b2">Mandatsgegenstand</label><input class="val flex-fill" id="b2" value="Grundstücksverträge" readonly></div>
              <div class="frow"><label for="b3">Altes Aktenzeichen</label><input class="val flex-fill" id="b3" readonly></div>
              <div class="frow"><label for="b4">Streitwert / Aufbewahrung (Jahre)</label><input class="val w270 num" id="b4" value="50.000,00" readonly><input class="val w80" aria-label="Aufbewahrung" readonly></div>
              <div class="frow"><label for="b5">Angebotsdatum / -volumen</label><input class="val w270" id="b5" readonly><input class="val flex-fill" aria-label="Angebotsvolumen" readonly></div>
              <div class="frow"><label for="b6">Sprache / Kultur</label><input class="val w270" id="b6" value="Deutsch" readonly><input class="val flex-fill" aria-label="Kultur" readonly></div>
              <div class="frow"><label for="b7">Bemerkung</label><input class="val flex-fill" id="b7" readonly></div>
            </fieldset>
            <fieldset class="fs fs-c"><legend>Status</legend>
              <div class="frow"><label for="c0">Mandatsentscheidung</label><input class="val w140" id="c0" value="21.08.2018" readonly></div>
              <div class="frow"><label for="c1">Ablehnungsgrund</label><input class="val flex-fill" id="c1" readonly></div>
              <div class="frow"><label for="c2">Ablagedatum / Ablagenummer</label><input class="val w140" id="c2" readonly><input class="val w100" aria-label="Ablagenummer" readonly></div>
            </fieldset>
            <fieldset class="fs fs-d"><legend>Haftung</legend>
              <div class="frow mb-2"><label for="d0">Geldwäschegesetz Prüfung abgeschlossen</label><input class="form-check-input tick" type="checkbox" id="d0" disabled></div>
              <div class="frow mb-2"><label for="d1">Erhöhtes Haftungsrisiko</label><input class="form-check-input tick" type="checkbox" id="d1" disabled><input class="val w200" aria-label="Haftungsrisiko" readonly></div>
              <div class="frow"><label for="d2">Kanzleipolice / Haftungsbeschränkung / Zusatzversicherung</label><input class="val w230" id="d2" readonly><input class="val flex-fill w80" aria-label="Haftungsbeschränkung" readonly><input class="val flex-fill w80" aria-label="Zusatzversicherung" readonly></div>
            </fieldset>
          </form>
          <ul class="tabs"><li><a class="on" href="#">Aktendaten</a></li><li><a href="#">Zusatzdaten</a></li><li><a href="#">Rechtsgebiete</a></li><li><a href="#">Kategorien</a></li><li><a href="#">Aktenbeziehungen</a></li><li><a href="#">Abrechnungsinformation</a></li><li><a href="#">Akquisitionsverteilung</a></li></ul>
        </section>
      </div>

      <div class="col-side">
        <section class="pane soft grow">
          <div class="pane-head"><h2 class="pane-title">Beteiligte</h2><div class="acts d-flex align-items-center" style="color:#858585"><button class="plain" aria-label="Anheften"><svg width="15" height="20"><use href="#i-pin"/></svg></button><button class="plain" aria-label="Schließen"><svg width="19" height="19"><use href="#i-x"/></svg></button></div></div>
          <div class="toolbar">
            <button class="plain" aria-label="Neu"><svg width="32" height="32"><use href="#i-plus"/></svg></button>
            <button class="plain" aria-label="Anzeigen"><svg width="32" height="32"><use href="#i-win"/></svg></button>
            <button class="plain" aria-label="Bearbeiten"><svg width="32" height="32"><use href="#i-pen"/></svg></button>
            <button class="plain" aria-label="Löschen"><svg width="32" height="32"><use href="#i-del"/></svg></button>
            <button class="plain" aria-label="Prüfen"><svg width="32" height="32"><use href="#i-clip"/></svg></button>
            <button class="plain" aria-label="Historie"><svg width="36" height="34"><use href="#i-calclock"/></svg></button>
            <button class="plain" aria-label="Kontakte"><svg width="32" height="32"><use href="#i-people"/></svg></button>
            <button class="plain" aria-label="Details"><svg width="32" height="32"><use href="#i-win"/></svg></button>
            <button class="plain ms-auto" aria-label="Ansicht speichern"><svg width="36" height="34"><use href="#i-calnew"/></svg></button>
            <button class="plain" aria-label="Ansicht löschen"><svg width="36" height="34"><use href="#i-caldel"/></svg></button>
          </div>
          <div class="band"></div>
          <div class="grid-wrap flex-fill">
            <div class="grid-hold">
            <table class="table grid-table">
              <colgroup><col style="width:36px"><col style="width:112px"><col style="width:341px"><col style="width:97px"><col style="width:165px"><col style="width:228px"><col></colgroup>
              <thead><tr><th></th><th>Kontak...</th><th>Kontakt</th><th>Aktiv</th><th>Kontaktart</th><th>Beteiligungsart</th><th>Verfahrensbete</th></tr></thead>
              <tbody>
                <tr class="picked"><td><svg width="9" height="17"><use href="#i-right"/></svg></td><td class="num">492</td><td>Test GmbH ehemals Test AG</td><td class="midc"><input class="form-check-input tick" type="checkbox" checked aria-label="Aktiv"></td><td>Organisation</td><td>Mandant</td><td></td></tr>
                <tr><td></td><td class="num">422</td><td>test</td><td class="midc"><input class="form-check-input tick" type="checkbox" checked aria-label="Aktiv"></td><td>Person</td><td>Gegner</td><td></td></tr>
                <tr><td></td><td class="num">493</td><td>Verkaufs AG</td><td class="midc"><input class="form-check-input tick" type="checkbox" checked aria-label="Aktiv"></td><td>Organisation</td><td>Notariatsbeteiligte</td><td>Veräußerer</td></tr>
              </tbody>
            </table>
            </div>
            <div class="vs"><div class="vs-head"></div><div class="vs-track"><button class="sb" aria-label="Nach oben"><svg width="14" height="9"><use href="#i-up"/></svg></button><div class="flex-fill"></div><button class="sb" aria-label="Nach unten"><svg width="14" height="9"><use href="#i-down"/></svg></button></div></div>
          </div>
          <div class="hs mb-1"><div class="hs-corner"></div><button class="sb" aria-label="Nach links"><svg width="9" height="16"><use href="#i-left"/></svg></button><div class="flex-fill"><div class="thumb" style="width:29.500%"></div></div><button class="sb" aria-label="Nach rechts"><svg width="9" height="16"><use href="#i-right"/></svg></button><div class="hs-end"></div></div>
          <ul class="tabs"><li><a class="on" href="#">Beteiligte</a></li><li><a href="#">Termine</a></li><li><a href="#">Fristen</a></li><li><a href="#">Konfliktcheck</a></li><li><a href="#">Abrechnungskonfiguration</a></li><li><a href="#">Aktenhierarchie</a></li></ul>
        </section>

        <section class="pane soft grow">
          <div class="pane-head"><h2 class="pane-title">Verantwortliche</h2><div class="acts d-flex align-items-center" style="color:#858585"><button class="plain" aria-label="Anheften"><svg width="15" height="20"><use href="#i-pin"/></svg></button><button class="plain" aria-label="Schließen"><svg width="19" height="19"><use href="#i-x"/></svg></button></div></div>
          <div class="toolbar">
            <button class="plain" aria-label="Neu"><svg width="32" height="32"><use href="#i-plus"/></svg></button>
            <button class="plain" aria-label="Anzeigen"><svg width="32" height="32"><use href="#i-win"/></svg></button>
            <button class="plain" aria-label="Bearbeiten"><svg width="32" height="32"><use href="#i-pen"/></svg></button>
            <button class="plain" aria-label="Löschen"><svg width="32" height="32"><use href="#i-del"/></svg></button>
            <button class="plain" aria-label="Historie"><svg width="36" height="34"><use href="#i-calclock"/></svg></button>
            <button class="plain" aria-label="Mitarbeiter"><svg width="36" height="34"><use href="#i-pcuser"/></svg></button>
            <button class="plain ms-auto" aria-label="Ansicht speichern"><svg width="36" height="34"><use href="#i-calnew"/></svg></button>
            <button class="plain" aria-label="Ansicht löschen"><svg width="36" height="34"><use href="#i-caldel"/></svg></button>
          </div>
          <div class="band"></div>
          <div class="grid-wrap flex-fill">
            <div class="grid-hold">
            <table class="table grid-table">
              <colgroup><col style="width:36px"><col style="width:368px"><col style="width:113px"><col style="width:154px"><col style="width:246px"><col></colgroup>
              <thead><tr><th></th><th>Verantwortlicher</th><th>Aktiv</th><th></th><th>Verantwortlichkeit</th><th>Mitarbeiterstatus</th></tr></thead>
              <tbody>
                <tr class="picked"><td><svg width="9" height="17"><use href="#i-right"/></svg></td><td>Hirsch, Jörg</td><td class="midc"><input class="form-check-input tick" type="checkbox" checked aria-label="Aktiv"></td><td>Mitarbeiter</td><td>HVRA</td><td>Partner</td></tr>
                <tr><td></td><td>Hamburg</td><td class="midc"><input class="form-check-input tick" type="checkbox" checked aria-label="Aktiv"></td><td>Standort</td><td>HV-Standort</td><td></td></tr>
                <tr><td></td><td>Hubenschmid Graf, Otto</td><td class="midc"><input class="form-check-input tick" type="checkbox" checked aria-label="Aktiv"></td><td>Mitarbeiter</td><td>Berater</td><td>Partner</td></tr>
              </tbody>
            </table>
            </div>
            <div class="vs"><div class="vs-head"></div><div class="vs-track"><button class="sb" aria-label="Nach oben"><svg width="14" height="9"><use href="#i-up"/></svg></button><div class="flex-fill"></div><button class="sb" aria-label="Nach unten"><svg width="14" height="9"><use href="#i-down"/></svg></button></div></div>
          </div>
          <div class="hs mb-1"><div class="hs-corner"></div><button class="sb" aria-label="Nach links"><svg width="9" height="16"><use href="#i-left"/></svg></button><div class="flex-fill"><div class="thumb" style="width:49%"></div></div><button class="sb" aria-label="Nach rechts"><svg width="9" height="16"><use href="#i-right"/></svg></button><div class="hs-end"></div></div>
          <ul class="tabs"><li><a class="on" href="#">Verantwortliche</a></li><li><a href="#">Eigenschaftsliste</a></li><li><a href="#">Wiedervorlagen</a></li><li><a href="#">Konfliktstichwörter</a></li><li><a href="#">Zugriffsrechte</a></li></ul>
        </section>
      </div>
    </div>
  </div>
</main>
</div>
<script src="https://cdn.jsdelivr.net/npm/bootstrap@5.3.0/dist/js/bootstrap.bundle.min.js"></script>
</body>
</html>
